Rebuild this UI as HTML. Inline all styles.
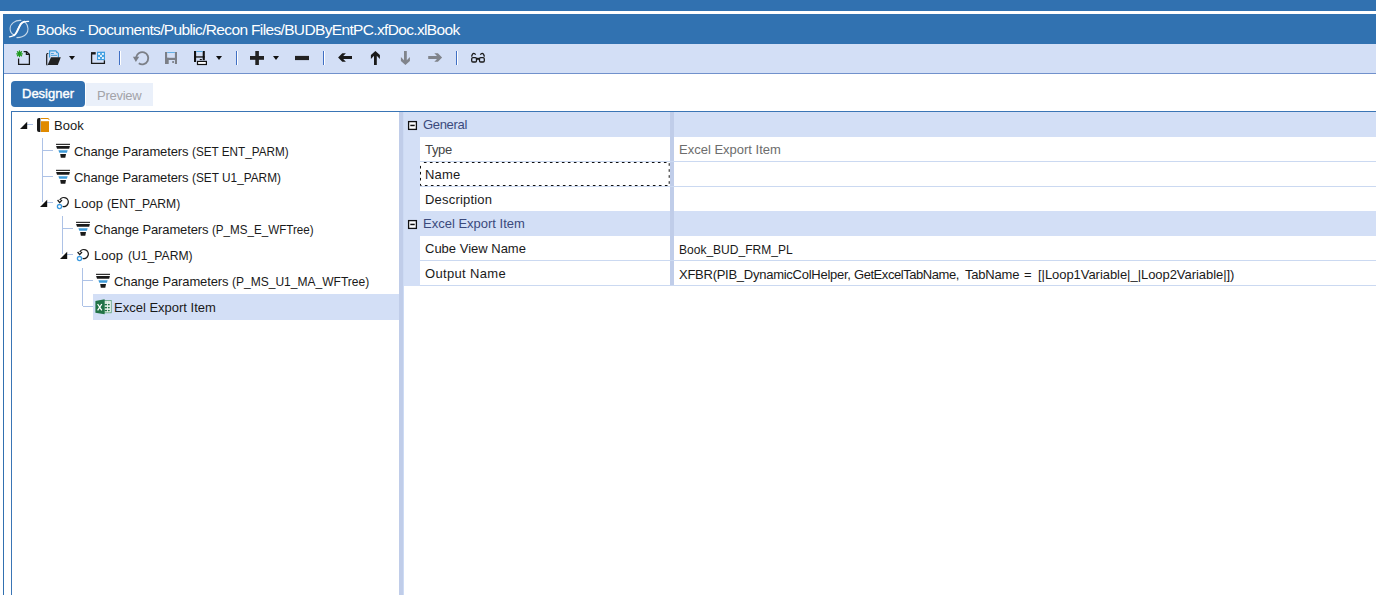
<!DOCTYPE html>
<html><head><meta charset="utf-8">
<style>
*{margin:0;padding:0;box-sizing:border-box}
html,body{width:1376px;height:595px;overflow:hidden;background:#fff;font-family:"Liberation Sans",sans-serif;position:relative}
.a{position:absolute}
#topbar{left:0;top:0;width:1376px;height:11px;background:#3171b0}
#winborder{left:3px;top:14px;width:1px;height:581px;background:#3170b0}
#title{left:4px;top:14px;width:1372px;height:30px;background:#3172b1}
#titletext{left:36px;top:21px;color:#fff;font-size:15.5px;letter-spacing:-0.65px;white-space:nowrap;line-height:18px}
#toolbar{left:4px;top:44px;width:1372px;height:29px;background:#d3dff6}
#tbline{left:4px;top:73px;width:1372px;height:1px;background:#7191cc}
#designer{left:11px;top:81px;width:74px;height:26px;background:#3271b1;border-radius:4px}
#designer span{position:absolute;left:11px;top:5px;color:#fff;font-size:13px;-webkit-text-stroke:0.4px #fff;letter-spacing:0px;line-height:16px}
#preview{left:86px;top:83px;width:67px;height:23px;background:#eaf0fa}
#preview span{position:absolute;left:11px;top:5px;color:#a3a3a8;font-size:13px;letter-spacing:-0.27px;line-height:16px}
#panelTop{left:11px;top:111px;width:1365px;height:1px;background:#3a75b5}
#panelLeft{left:11px;top:111px;width:1px;height:484px;background:#3a75b5}
#split{left:399px;top:112px;width:5px;height:483px;background:#c0cde9;border-right:1px solid #cddbf4}
.tr{position:absolute;font-size:13px;color:#1a1a1a;white-space:nowrap;line-height:16px}
.sx{transform-origin:0 0}
.sel{left:93px;top:294px;width:306px;height:26px;background:#d3dff6}
.prow{position:absolute;left:404px;width:972px;height:25px}
.ph{background:#d3dff6}
.pl{position:absolute;font-size:13px;color:#1a1a1a;line-height:16px;white-space:nowrap}
.pv{position:absolute;left:679px;font-size:13px;color:#1a1a1a;line-height:16px;white-space:nowrap}
#pmargin{left:404px;top:112px;width:16px;height:174px;background:#d3dff6}
.hline{position:absolute;left:420px;width:956px;height:1px;background:#cbd9f1}
#coldiv{left:670px;top:112px;width:4px;height:174px;background:#c0cde9}
#focus{left:420px;top:162px;width:250px;height:24px;border:1px dashed #222}
svg{position:absolute;left:0;top:0}
</style></head><body>
<div class="a" id="topbar"></div>
<div class="a" id="title"></div>
<div class="a" id="winborder"></div>
<div class="a" id="titletext">Books - Documents/Public/Recon Files/BUDByEntPC.xfDoc.xlBook</div>
<div class="a" id="toolbar"></div>
<div class="a" id="tbline"></div>
<div class="a" id="designer"><span>Designer</span></div>
<div class="a" id="preview"><span>Preview</span></div>
<div class="a" id="panelTop"></div>
<div class="a" id="panelLeft"></div>

<!-- tree -->
<div class="a sel"></div>
<div class="tr" style="left:54px;top:118px">Book</div>
<div class="tr" style="left:74px;top:144px;letter-spacing:-0.11px">Change Parameters</div>
<div class="tr sx" style="left:192px;top:144px;transform:scaleX(0.9025)">(SET ENT_PARM)</div>
<div class="tr" style="left:74px;top:170px;letter-spacing:-0.11px">Change Parameters</div>
<div class="tr sx" style="left:192px;top:170px;transform:scaleX(0.9097)">(SET U1_PARM)</div>
<div class="tr" style="left:74px;top:196px">Loop</div>
<div class="tr sx" style="left:107px;top:196px;transform:scaleX(0.9333)">(ENT_PARM)</div>
<div class="tr" style="left:94px;top:222px;letter-spacing:-0.11px">Change Parameters</div>
<div class="tr sx" style="left:212px;top:222px;transform:scaleX(0.8935)">(P_MS_E_WFTree)</div>
<div class="tr" style="left:94px;top:248px">Loop</div>
<div class="tr sx" style="left:127.5px;top:248px;transform:scaleX(0.9359)">(U1_PARM)</div>
<div class="tr" style="left:114px;top:274px;letter-spacing:-0.11px">Change Parameters</div>
<div class="tr sx" style="left:232px;top:274px;transform:scaleX(0.9249)">(P_MS_U1_MA_WFTree)</div>
<div class="tr" style="left:114px;top:300px">Excel Export Item</div>

<div class="a" id="split"></div>
<!-- properties -->
<div class="a" id="pmargin"></div>
<div class="prow ph" style="top:112px"></div>
<div class="prow ph" style="top:211px"></div>
<div class="a" id="coldiv"></div>
<div class="hline" style="top:161px"></div>
<div class="hline" style="top:186px"></div>
<div class="hline" style="top:260px"></div>
<div class="hline" style="top:285px"></div>
<div class="pl" style="left:423px;top:117px;color:#3b4a7c;letter-spacing:-0.33px">General</div>
<div class="pl" style="left:425px;top:142px;color:#454545;letter-spacing:-0.3px">Type</div>
<div class="pl" style="left:425px;top:167px;letter-spacing:0.18px">Name</div>
<div class="pl" style="left:425px;top:192px;letter-spacing:0.19px">Description</div>
<div class="pl" style="left:423px;top:216px;color:#3b4a7c">Excel Export Item</div>
<div class="pl" style="left:425px;top:241px">Cube View Name</div>
<div class="pl" style="left:425px;top:266px;letter-spacing:0.34px">Output Name</div>
<div class="pv" style="top:142px;color:#6d6d6d">Excel Export Item</div>
<div class="pv sx" style="top:242px;transform:scaleX(0.925)">Book_BUD_FRM_PL</div>
<div class="pv" style="top:267px;letter-spacing:-0.26px">XFBR(PIB_DynamicColHelper,</div>
<div class="pv" style="left:854px;top:267px;letter-spacing:-0.447px">GetExcelTabName,</div>
<div class="pv" style="left:965px;top:267px;letter-spacing:-0.2px">TabName</div>
<div class="pv" style="left:1024px;top:267px">=</div>
<div class="pv" style="left:1038px;top:267px;letter-spacing:-0.05px">[|Loop1Variable|_|Loop2Variable|])</div>

<svg width="1376" height="595" viewBox="0 0 1376 595">
<!-- title logo -->
<g fill="none" stroke="#fff" stroke-linecap="round">
<path d="M20.8 20.4 C15 20.1 10.1 24 10.1 28.7 C10.1 31.5 11.4 33.6 14 35.1" stroke-width="1.1" opacity="0.72"/>
<path d="M25.4 22.6 C27.3 24.2 28 26.5 28 28.7 C28 32.5 25.5 35.5 22 36.8 C20.5 37.4 18.5 37.6 16.9 37.6" stroke-width="1.1" opacity="0.72"/>
<path d="M9.4 36.8 C12.5 36.6 15.3 34.7 16.6 32.3 C17.8 30 19.5 26 20.9 23.9 C22.5 22 25 21.3 28.6 21.4" stroke-width="1.2"/>
<path d="M14 35.3 C15.3 34.7 16 33.4 16.6 32.3 C17.8 30 19.5 26 20.9 23.9 C21.8 22.8 23 22.1 24.5 21.7" stroke-width="1.9"/>
</g>
<!-- toolbar: new -->
<g stroke="#1f9a1f" stroke-width="1.3" stroke-linecap="round">
<path d="M19.5 51 V56.6 M16.7 53.8 H22.3 M17.5 51.8 L21.5 55.8 M21.5 51.8 L17.5 55.8"/>
</g>
<path d="M18.6 58.4 V64.4 H29.4 V54.2 L26.6 51.6 H23.6 M26.4 51.6 V54.4 H29.4" fill="none" stroke="#1a1a1a" stroke-width="1.25"/>
<!-- open -->
<path d="M49.6 57.5 V50.8 H55.8 L58.4 53.4 V57.5" fill="#d5e1f5" stroke="#3a9ad9" stroke-width="1.2"/>
<circle cx="56.6" cy="52.6" r="0.6" fill="#3a9ad9"/>
<path d="M51 53.5 H53.8 M51 55.4 H57" stroke="#3a9ad9" stroke-width="0.9"/>
<path d="M48.3 53.5 H47.6 Q46.7 53.5 46.7 54.4 V64.2 Q46.7 64.8 47.4 64.8" fill="none" stroke="#1a1a1a" stroke-width="1.2"/>
<path d="M51 57.3 H60.8 L57.8 64.9 H47.6 Z" fill="#222"/>
<path d="M69 56 H75 L72 60 Z" fill="#111"/>
<!-- third icon -->
<path d="M91.6 53.5 V63.3 H104.4 V60.3" fill="none" stroke="#1a1a1a" stroke-width="1.3"/>
<rect x="91" y="52.1" width="4.7" height="2.4" fill="#1a1a1a"/>
<rect x="97" y="51.7" width="8" height="8.4" fill="#3d9de0"/>
<g stroke="#fff" stroke-width="0.9"><path d="M99.2 54 L102.8 57.8 M102.8 54 L99.2 57.8"/></g>
<g fill="#fff"><path d="M98.2 52.9 H100.6 L98.2 55.3 Z M103.8 52.9 H101.4 L103.8 55.3 Z M98.2 58.9 H100.6 L98.2 56.5 Z M103.8 58.9 H101.4 L103.8 56.5 Z"/></g>
<!-- separators -->
<g fill="#3f6fc4"><rect x="119" y="51" width="1" height="14"/><rect x="236" y="51" width="1" height="14"/><rect x="323" y="51" width="1" height="14"/><rect x="456" y="51" width="1" height="14"/></g>
<g fill="#fff"><rect x="120" y="51" width="1" height="14"/><rect x="237" y="51" width="1" height="14"/><rect x="324" y="51" width="1" height="14"/><rect x="457" y="51" width="1" height="14"/></g>
<!-- refresh gray -->
<path d="M136.2 57.2 A6.1 6.1 0 1 1 138.8 63.3" fill="none" stroke="#7b7f87" stroke-width="1.9"/>
<path d="M132.9 56.8 H139.2 L135.9 61.9 Z" fill="#7b7f87"/>
<!-- save gray -->
<g fill="#7b7f87">
<rect x="165" y="52" width="2.1" height="12"/><rect x="165" y="57.8" width="3.7" height="6.2"/>
<rect x="174.9" y="52" width="2.1" height="12"/><rect x="165" y="57.8" width="12" height="2.2"/>
<rect x="172.2" y="61.1" width="1.8" height="1.8"/>
</g>
<rect x="167.2" y="52" width="7.7" height="0.8" fill="#49a3e0"/>
<!-- save as black -->
<g fill="#111">
<rect x="194" y="51" width="2.1" height="11"/><rect x="202.7" y="51" width="2.1" height="9.2"/>
<rect x="194" y="56.3" width="10.8" height="1.3"/><rect x="199.8" y="59" width="2" height="1.1"/>
</g>
<rect x="196.1" y="51" width="6.6" height="0.9" fill="#49a3e0"/>
<rect x="197.5" y="61.4" width="8.9" height="3.1" fill="#fff" stroke="#111" stroke-width="1.2"/>
<path d="M216 56 H222 L219 60 Z" fill="#111"/>
<!-- plus / minus -->
<rect x="250" y="56" width="14" height="3.8" fill="#222"/>
<rect x="255.3" y="51" width="3.6" height="14" fill="#222"/>
<path d="M273 56 H279 L276 60 Z" fill="#111"/>
<rect x="295" y="55.9" width="14" height="4.2" fill="#222"/>
<!-- arrows -->
<path d="M338.1 57.5 L342.3 53.2 H345.9 L343.2 56.1 H352 V58.9 H343.2 L345.9 61.8 H342.3 Z" fill="#1a1a1a"/>
<path d="M375.4 50.9 L379.9 55 V58.9 L376.8 55.8 V64.9 H374 V55.8 L370.9 58.9 V55 Z" fill="#1a1a1a"/>
<path d="M405.4 65.1 L409.9 61 V57.1 L406.8 60.2 V51 H404 V60.2 L400.9 57.1 V61 Z" fill="#80848b"/>
<path d="M442.1 57.5 L437.9 53.2 H434.3 L437 56.1 H428.2 V58.9 H437 L434.3 61.8 H437.9 Z" fill="#80848b"/>
<!-- glasses -->
<g fill="none" stroke="#1a1a1a" stroke-width="1.3">
<rect x="471.7" y="57.7" width="4.8" height="4.3" rx="1.2"/>
<rect x="479.5" y="57.7" width="4.8" height="4.3" rx="1.2"/>
<path d="M471.6 56.6 Q472.2 53.3 473.8 53.3 Q475 53.3 475.6 54.7"/>
<path d="M484.4 56.6 Q483.8 53.3 482.2 53.3 Q481 53.3 480.4 54.7"/>
</g>
<rect x="476.5" y="57.8" width="3" height="2" fill="#1a1a1a"/>
<!-- tree connectors -->
<g fill="#adc2e6">
<rect x="27" y="124" width="6" height="1"/>
<rect x="42" y="138" width="1" height="64"/>
<rect x="43" y="150" width="10" height="1"/>
<rect x="43" y="176" width="10" height="1"/>
<rect x="47" y="202" width="6" height="1"/>
<rect x="62" y="216" width="1" height="38"/>
<rect x="63" y="228" width="10" height="1"/>
<rect x="67" y="254" width="6" height="1"/>
<rect x="82" y="268" width="1" height="38"/>
<rect x="83" y="280" width="10" height="1"/>
<rect x="83" y="306" width="10" height="1"/>
</g>
<!-- expanders -->
<g fill="#111">
<path d="M27.2 121.8 V129 H20 Z"/>
<path d="M47.2 199.8 V207 H40 Z"/>
<path d="M67.2 251.8 V259 H60 Z"/>
</g>
<!-- book icon -->
<path d="M39 118 H40.4 V132 H39 Q37 132 37 130 V120 Q37 118 39 118 Z" fill="#1a1a1a"/>
<path d="M41 121.2 H49 V132 H41 Z" fill="#e08a00"/>
<path d="M41 118.5 H48 Q49 118.5 49 119.8" fill="none" stroke="#e08a00" stroke-width="1"/>
<!-- funnels -->
<g id="fun">
<rect x="56" y="143.8" width="14" height="1.1" fill="#1a1a1a"/>
<path d="M56.1 146.1 H69.9 L69.2 148.8 H57 Z" fill="#1a1a1a"/>
<path d="M58.4 150.2 H67.7 L66.9 152.8 H59.3 Z" fill="#3d9ad8"/>
<path d="M60.2 154 H66 L65.3 157.7 H60.8 Z" fill="#1a1a1a"/>
</g>
<use href="#fun" x="20" y="78"/>
<use href="#fun" x="40" y="130"/>
<use href="#fun" x="0" y="26"/>
<!-- loops -->
<g id="loop">
<path d="M62.6 206.4 A4.5 4.5 0 1 0 59.8 200" fill="none" stroke="#1a1a1a" stroke-width="1.3"/>
<path d="M57.6 200 L59.7 202.6 L62 200" fill="none" stroke="#1a1a1a" stroke-width="1.3"/>
<circle cx="59.5" cy="206.6" r="2.1" fill="none" stroke="#3b9ae0" stroke-width="1.3"/>
</g>
<use href="#loop" x="20" y="52"/>
<!-- excel icon -->
<rect x="104.2" y="300.8" width="6.6" height="11.6" fill="#d6e8dc"/>
<path d="M104.5 304.6 H110 M104.5 307.6 H110 M104.5 310.6 H110" stroke="#217346" stroke-width="1.1"/>
<path d="M107.5 301 V312" stroke="#eaf3ec" stroke-width="0.9"/>
<path d="M110.2 301.5 V312.3 H105" fill="none" stroke="#fff" stroke-width="0.9"/>
<rect x="104" y="300.6" width="7.2" height="12.2" fill="none" stroke="#4e9a68" stroke-width="0.7"/>
<path d="M95.4 301 L104.6 299.2 V314.2 L95.4 312.8 Z" fill="#217346"/>
<path d="M97.6 304 L101.8 310.4 M101.8 304 L97.6 310.4" stroke="#fff" stroke-width="1.3"/>
<!-- focus -->
<rect x="420.5" y="162.5" width="248.7" height="23" fill="none" stroke="#111" stroke-width="1" stroke-dasharray="2.6 3.4" stroke-dashoffset="-3.4"/>
<!-- property minus boxes -->
<g fill="#fff" stroke="#111" stroke-width="1.3">
<rect x="408.6" y="121.6" width="7.8" height="7.8"/>
<rect x="408.6" y="220.6" width="7.8" height="7.8"/>
</g>
<rect x="410.3" y="124.7" width="4.4" height="1.5" fill="#111"/>
<rect x="410.3" y="223.7" width="4.4" height="1.5" fill="#111"/>
</svg>
</body></html>
